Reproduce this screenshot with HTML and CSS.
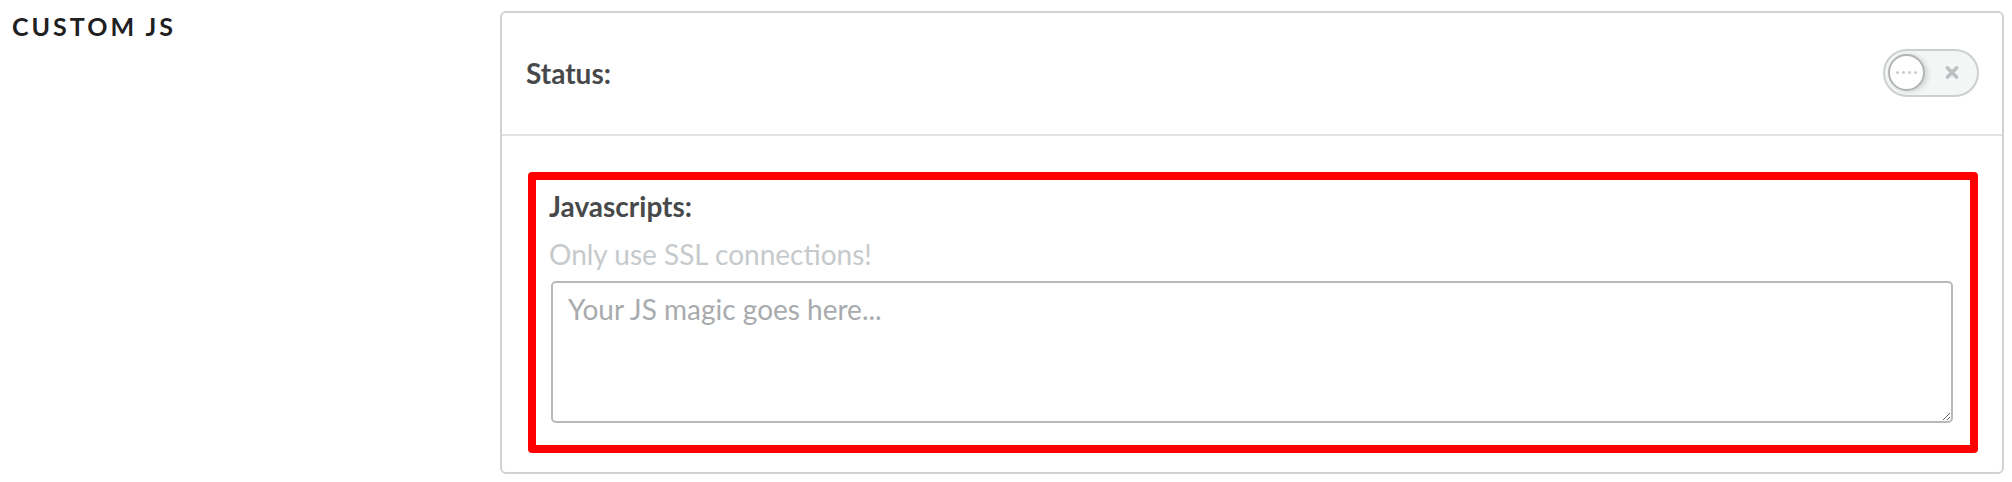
FILE: index.html
```html
<!DOCTYPE html>
<html lang="en">
<head>
<meta charset="utf-8">
<title>Custom JS</title>
<link rel="stylesheet" href="styles.css">
</head>
<body>
<section class="setting">
  <h2 class="setting-title">CUSTOM JS</h2>
  <div class="panel">
    <div class="panel-head">
      <span class="field-label">Status:</span>
      <span class="toggle" role="switch" aria-checked="false">
        <span class="knob"><i></i><i></i><i></i><i></i></span>
        <svg class="toggle-x" width="14" height="13" viewBox="0 0 14 13" aria-hidden="true">
          <path d="M2.5 2 L11.5 11 M11.5 2 L2.5 11" stroke="#bcc0c2" stroke-width="3.6" stroke-linecap="round"/>
        </svg>
      </span>
    </div>
    <div class="panel-body">
      <div class="form-group">
        <label class="field-label" for="js">Javascripts:</label>
        <p class="help">Only use SSL connections!</p>
        <textarea id="js" class="code" placeholder="Your JS magic goes here..."></textarea>
      </div>
    </div>
  </div>
</section>
</body>
</html>
```

FILE: styles.css
```css
* { box-sizing: border-box; }

html, body {
  margin: 0;
  background: #ffffff;
  font-family: Lato, "Open Sans", "Liberation Sans", sans-serif;
}

.setting {
  display: grid;
  grid-template-columns: 488px 1504px;
  padding: 11px 8px 0 12px;
}

.setting-title {
  margin: 0;
  font-size: 25px;
  line-height: 30px;
  font-weight: 700;
  letter-spacing: 3px;
  color: #1f2022;
}

.panel {
  border: 2px solid #cfd3d5;
  border-radius: 6px;
  background: #fff;
}

.panel-head {
  height: 123px;
  display: flex;
  align-items: center;
  justify-content: space-between;
  padding: 0 23px 2px 24px;
  border-bottom: 2px solid #e0e3e5;
}

.field-label {
  display: block;
  font-size: 28px;
  line-height: 34px;
  font-weight: 700;
  color: #47494b;
}

.toggle {
  width: 96px;
  height: 48px;
  border: 2px solid #ccd0d1;
  border-radius: 24px;
  background: #f4f5f5;
  display: flex;
  align-items: center;
  padding-left: 3px;
}

.knob {
  width: 37px;
  height: 37px;
  border-radius: 50%;
  border: 2px solid #b1b6b4;
  background: #fff;
  box-shadow: 3px 1px 5px rgba(0, 0, 0, 0.13);
  display: flex;
  align-items: center;
  justify-content: center;
  gap: 3px;
}

.knob i {
  width: 3px;
  height: 3px;
  border-radius: 50%;
  background: #c9cccd;
}

.toggle-x {
  margin-left: 20px;
}

.panel-body {
  padding: 36px 24px 19px 26px;
}

.form-group {
  border: 8px solid #ff0000;
  border-radius: 4px;
  padding: 9px 17px 22px 13px;
}

.help {
  margin: 14px 0 10px;
  font-size: 28px;
  line-height: 34px;
  color: #c6cacc;
}

.code {
  display: block;
  width: calc(100% - 2px);
  margin-left: 2px;
  height: 142px;
  border: 2px solid #b6babc;
  border-radius: 5px;
  padding: 9px 15px;
  font-family: Lato, "Open Sans", "Liberation Sans", sans-serif;
  font-size: 28px;
  line-height: 34px;
  color: #444;
  background: #fff;
  resize: both;
}

.code::placeholder {
  color: #a8abad;
  opacity: 1;
}
```
